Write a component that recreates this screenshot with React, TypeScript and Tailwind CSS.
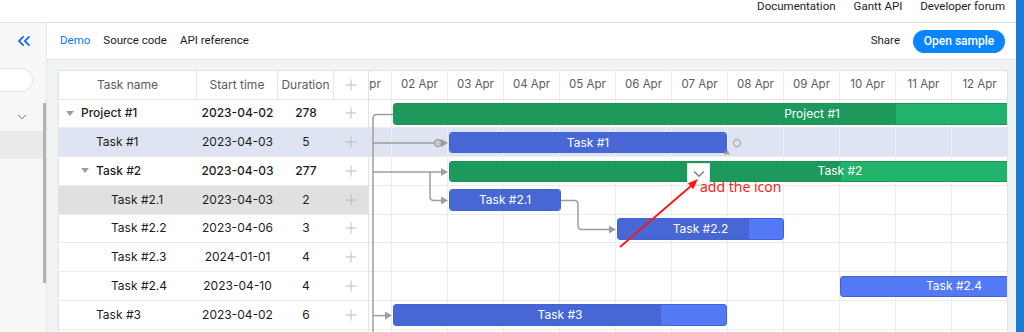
import { ChevronDown, ChevronsLeft, Plus } from 'lucide-react';
import clsx from 'clsx';

type Row = { name: string; start: string; dur: string; level: number; parent?: boolean };

const rows: Row[] = [
  { name: 'Project #1', start: '2023-04-02', dur: '278', level: 0, parent: true },
  { name: 'Task #1', start: '2023-04-03', dur: '5', level: 1 },
  { name: 'Task #2', start: '2023-04-03', dur: '277', level: 1, parent: true },
  { name: 'Task #2.1', start: '2023-04-03', dur: '2', level: 2 },
  { name: 'Task #2.2', start: '2023-04-06', dur: '3', level: 2 },
  { name: 'Task #2.3', start: '2024-01-01', dur: '4', level: 2 },
  { name: 'Task #2.4', start: '2023-04-10', dur: '4', level: 2 },
  { name: 'Task #3', start: '2023-04-02', dur: '6', level: 1 },
];

type Bar = { row: number; left: number; width: number; progress: number; label: string; summary?: boolean };

// positions in px inside the chart (day = 56px, scrolled 33px)
const bars: Bar[] = [
  { row: 0, left: 24, width: 838, progress: 502, label: 'Project #1', summary: true },
  { row: 1, left: 80, width: 278, progress: 278, label: 'Task #1' },
  { row: 2, left: 80, width: 782, progress: 391, label: 'Task #2', summary: true },
  { row: 3, left: 80, width: 112, progress: 112, label: 'Task #2.1' },
  { row: 4, left: 248, width: 167, progress: 131, label: 'Task #2.2' },
  { row: 6, left: 471, width: 228, progress: 0, label: 'Task #2.4' },
  { row: 7, left: 24, width: 334, progress: 267, label: 'Task #3' },
];

const days = ['01 Apr', '02 Apr', '03 Apr', '04 Apr', '05 Apr', '06 Apr', '07 Apr', '08 Apr', '09 Apr', '10 Apr', '11 Apr', '12 Apr'];

const cols = [
  { label: 'Task name', w: 'w-[138px]' },
  { label: 'Start time', w: 'w-[81px]' },
  { label: 'Duration', w: 'w-[56px]' },
];

function Caret() {
  return (
    <svg width="8" height="5" viewBox="0 0 8 5">
      <path d="M0 0h8L4 5z" fill="#9d9d9d" />
    </svg>
  );
}

function GanttBar({ bar }: { bar: Bar }) {
  return (
    <div
      className={clsx(
        'absolute top-[3.5px] z-[2] h-[21.5px] overflow-hidden rounded-[3px] border',
        bar.summary ? 'border-[#1c9457] bg-[#21b26b]' : 'border-[#4464d6] bg-[#5479f4]'
      )}
      style={{ left: bar.left, width: bar.width }}
    >
      <div className={clsx('h-full', bar.summary ? 'bg-[#1d995c]' : 'bg-[#4767d5]')} style={{ width: bar.progress }} />
      <span className="absolute inset-0 flex items-center justify-center text-[12px] text-white">{bar.label}</span>
    </div>
  );
}

function DayCells() {
  return (
    <div className="-ml-[33px] flex h-full">
      {days.map((d) => (
        <div key={d} className="h-full w-[56px] shrink-0 border-r border-[#eeeeee]" />
      ))}
    </div>
  );
}

function Links() {
  const stroke = '#9e9e9e';
  return (
    <svg className="pointer-events-none absolute left-0 top-0 z-[1]" width="638" height="240" viewBox="0 0 638 240">
      <g fill="none" stroke={stroke} strokeWidth="1.5">
        <path d="M24 14.4H8Q4 14.4 4 18.4V240" />
        <path d="M4 43.1H66" />
        <path d="M4 71.9H73" />
        <path d="M61 71.9V96.6Q61 100.6 65 100.6H73" />
        <path d="M192 100.6H205Q209 100.6 209 104.6V125.4Q209 129.4 213 129.4H241" />
        <path d="M4 215.6H17" />
      </g>
      <g fill={stroke}>
        <circle cx="69" cy="43.1" r="3.5" fill="#c8c8c8" stroke={stroke} strokeWidth="1.2" />
        <path d="M72 39.1L79 43.1L72 47.1z" />
        <path d="M72 67.9L79 71.9L72 75.9z" />
        <path d="M72 96.6L79 100.6L72 104.6z" />
        <path d="M240 125.4L247 129.4L240 133.4z" />
        <path d="M16 211.6L23 215.6L16 219.6z" />
        <path d="M358 49.5L355 54.5H361z" />
      </g>
      <circle cx="368" cy="43.1" r="3.5" fill="none" stroke="#aaaaaa" strokeWidth="1.3" />
    </svg>
  );
}

export default function App() {
  return (
    <div className="relative flex h-[332px] w-[1024px] overflow-hidden bg-white font-['Roboto',sans-serif] text-[#1d1d1d]">
      <div className="flex w-[1016px] flex-col">
        {/* top links */}
        <div className="flex h-[23px] shrink-0 items-start justify-end gap-[18px] border-b border-[#e3e3e3] pr-[11px] text-[11.5px] leading-[12px]">
          <span>Documentation</span>
          <span>Gantt API</span>
          <span>Developer forum</span>
        </div>

        <div className="flex min-h-0 flex-1">
          {/* sidebar */}
          <aside className="relative w-[47px] shrink-0 overflow-hidden border-r border-[#e6e6e6] bg-[#f7f7f7]">
            <div className="h-[36px] pl-[14px] pt-[8px]">
              <ChevronsLeft size={20} strokeWidth={2.2} className="text-[#1a73e8]" />
            </div>
            <div className="mt-[9px] -ml-[20px] h-[24px] w-[53px] rounded-full border border-[#e4e4e4] bg-white" />
            <div className="mt-[11px] flex h-[28px] items-center pl-[15px]">
              <ChevronDown size={14} strokeWidth={1.6} className="text-[#666]" />
            </div>
            <div className="h-[28px] w-[43px] bg-[#ebebeb]" />
            <div className="absolute left-[43px] top-[80px] h-[180px] w-[3px] bg-[#b2b2b2]" />
          </aside>

          {/* main */}
          <main className="flex min-w-0 flex-1 flex-col">
            <div className="flex h-[37px] shrink-0 items-center justify-between border-b border-[#e6e6e6] pl-[13px] pr-[11px] text-[11.5px]">
              <div className="flex items-center gap-[13px]">
                <span className="text-[#0a7cf2]">Demo</span>
                <span>Source code</span>
                <span>API reference</span>
              </div>
              <div className="flex items-center gap-[13px]">
                <span>Share</span>
                <button className="h-[23px] w-[92px] rounded-full bg-[#0a84ff] text-[12px] font-medium text-white">Open sample</button>
              </div>
            </div>

            <div className="flex min-h-0 flex-1 bg-[#eff3f4] pl-[11px] pr-[8px] pt-[10px]">
              <div className="flex w-[950px] flex-col overflow-hidden border border-b-0 border-[#e3e3e3] bg-white font-['Inter',sans-serif] text-[12px]">
                {/* header */}
                <div className="flex h-[28.5px] shrink-0 border-b border-[#e6e6e6] text-[#5c5c5c]">
                  <div className="flex w-[310px] shrink-0 border-r border-[#e3e3e3]">
                    {cols.map((c) => (
                      <div key={c.label} className={clsx('flex items-center justify-center border-r border-[#e8e8e8]', c.w)}>
                        {c.label}
                      </div>
                    ))}
                    <div className="flex w-[34px] items-center justify-center">
                      <Plus size={18} strokeWidth={1.2} className="text-[#b9b9b9]" />
                    </div>
                  </div>
                  <div className="w-[638px] overflow-hidden">
                    <div className="-ml-[33px] flex h-full">
                      {days.map((d) => (
                        <div key={d} className="flex h-full w-[56px] shrink-0 items-center justify-center border-r border-[#eeeeee] text-[11.5px]">
                          {d}
                        </div>
                      ))}
                    </div>
                  </div>
                </div>

                {/* body */}
                <div className="flex min-h-0 flex-1">
                  <div className="w-[310px] shrink-0 border-r border-[#e3e3e3]">
                    {rows.map((r, i) => (
                      <div
                        key={r.name}
                        className={clsx(
                          'flex h-[28.75px] items-center border-b border-[#ebebeb]',
                          i === 1 && 'bg-[#dfe4f2]',
                          i === 3 && 'bg-[#e0e0e0]',
                          r.parent && 'font-medium'
                        )}
                      >
                        <div className="flex w-[138px] items-center" style={{ paddingLeft: r.level * 15 }}>
                          <span className="flex w-[22px] justify-center">{r.parent && <Caret />}</span>
                          <span>{r.name}</span>
                        </div>
                        <div className="w-[81px] text-center">{r.start}</div>
                        <div className="w-[56px] text-center">{r.dur}</div>
                        <div className="flex w-[34px] justify-center">
                          <Plus size={18} strokeWidth={1.2} className="text-[#b9b9b9]" />
                        </div>
                      </div>
                    ))}
                    <div className="h-[28.75px]" />
                  </div>

                  <div className="relative w-[638px] overflow-hidden">
                    {rows.map((r, i) => (
                      <div key={r.name} className={clsx('relative h-[28.75px] border-b border-[#ebebeb]', i === 1 && 'bg-[#dfe4f2]')}>
                        <DayCells />
                        {bars
                          .filter((b) => b.row === i)
                          .map((b) => (
                            <GanttBar key={b.label} bar={b} />
                          ))}
                        {i === 2 && (
                          <div className="absolute left-[318px] top-[5.5px] z-[3] flex h-[22px] w-[23px] items-center justify-center border border-[#e2e6ee] bg-white shadow-[0_1px_1px_rgba(0,0,0,0.08)]">
                            <ChevronDown size={18} strokeWidth={1.8} className="text-[#7c7c7c]" />
                          </div>
                        )}
                      </div>
                    ))}
                    <div className="h-[28.75px]">
                      <DayCells />
                    </div>
                    <Links />
                  </div>
                </div>
              </div>
            </div>
          </main>
        </div>
      </div>

      <div className="w-[8px] shrink-0 bg-[#1b7bd5]" />

      {/* annotation */}
      <svg className="pointer-events-none absolute left-0 top-0 z-10" width="1024" height="332" viewBox="0 0 1024 332">
        <path d="M620 247L691 186" stroke="#ff1414" strokeWidth="1.8" />
        <path d="M698 179L693.2 189.2L688 183.2z" fill="#ff1414" />
      </svg>
      <span className="absolute left-[700px] top-[178px] z-10 font-['Noto_Sans',sans-serif] text-[14px] leading-[18px] text-[#ff1a1a]">
        add the icon
      </span>
    </div>
  );
}
